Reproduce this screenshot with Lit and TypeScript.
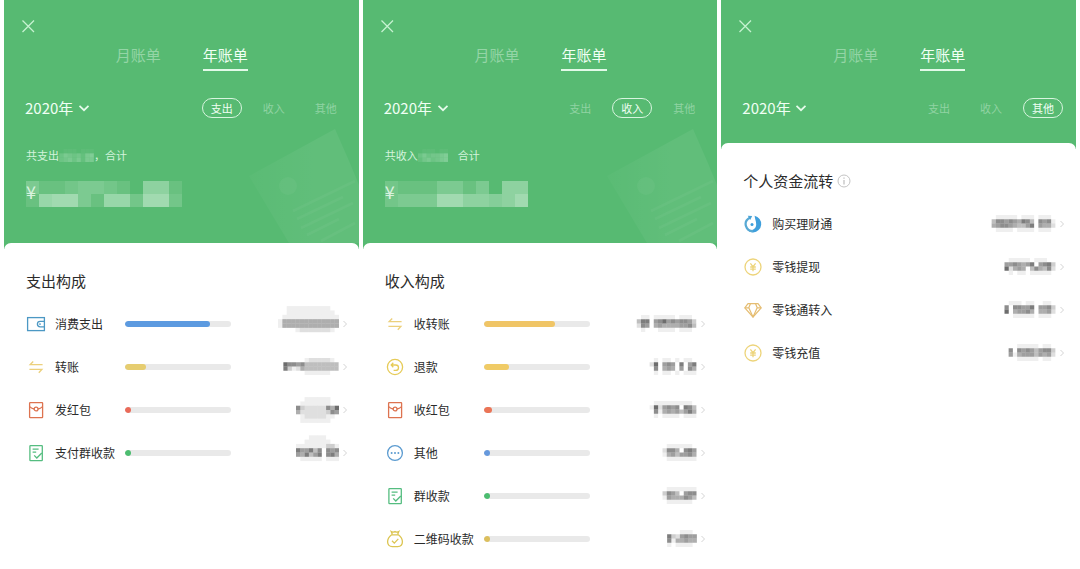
import { LitElement, html, svg, css, nothing } from "lit";
import { customElement, property } from "lit/decorators.js";
import { classMap } from "lit/directives/class-map.js";

type Row = {
  icon: string;
  label: string;
  mask: string[];
  share?: number;
  color?: string;
};

type Panel = {
  id: string;
  active: string;
  title: string;
  info?: boolean;
  summary?: { lead: string; mask: string[]; comma: string; amount: string[] };
  rows: Row[];
};

const FILTERS = ["支出", "收入", "其他"];

const PANELS: Panel[] = [
  {
    id: "out",
    active: "支出",
    title: "支出构成",
    summary: {
      lead: "共支出",
      mask: ["01110111", "35434256", "34535255"],
      comma: "，",
      amount: ["422344320662", "278842773883"],
    },
    rows: [
      { icon: "wallet", label: "消费支出", share: 80, color: "#5c9ae0",
        mask: ["00111111111100", "00111111111110", "01111111111111", "15555555555555", "15555555555555", "00001222222210", "00000000000000", "00000000000000"] },
      { icon: "transfer", label: "转账", share: 20, color: "#e6cd70",
        mask: ["0000012222210", "9776744444444", "8312544444444", "0000011111100"] },
      { icon: "packet", label: "发红包", share: 6, color: "#ea6a58",
        mask: ["0011111100", "0111111100", "7322222759", "5222222376", "0122222110", "0111111100"] },
      { icon: "sheet", label: "支付群收款", share: 6, color: "#4cbd70",
        mask: ["0001111000", "0011111100", "1111111331", "8668470767", "6584680785", "0111110111", "0000000000", "0000000000"] },
    ],
  },
  {
    id: "in",
    active: "收入",
    title: "收入构成",
    summary: {
      lead: "共收入",
      mask: ["0111011", "3534456", "2453456"],
      comma: "",
      amount: ["32224424066", "34448866568"],
    },
    rows: [
      { icon: "transfer", label: "收转账", share: 67, color: "#f0c566",
        mask: ["01101111101110", "48806796767763", "27605655556674", "01000111101110"] },
      { icon: "refund", label: "退款", share: 24, color: "#f0cb66",
        mask: ["01011010110", "29067608068", "07056506075", "01011010111"] },
      { icon: "packet", label: "收红包", share: 8, color: "#eb7456",
        mask: ["01111111110", "19267670874", "07156564685", "01011110111"] },
      { icon: "more", label: "其他", share: 6, color: "#6699dd",
        mask: ["01111110", "27750786", "15646675", "01111111"] },
      { icon: "sheet", label: "群收款", share: 6, color: "#4cbd70",
        mask: ["01111111", "37640677", "16555764", "01111110"] },
      { icon: "bag", label: "二维码收款", share: 6, color: "#dcbf5c",
        mask: ["0001110", "8326766", "7155655", "1011110"] },
    ],
  },
  {
    id: "other",
    active: "其他",
    title: "个人资金流转",
    info: true,
    rows: [
      { icon: "fund", label: "购买理财通",
        mask: ["011111011101110", "477676587407671", "567765446806552", "011110111101110"] },
      { icon: "coin", label: "零钱提现",
        mask: ["011111011100", "667656806783", "925650475472", "010110111110"] },
      { icon: "gem", label: "零钱通转入",
        mask: ["011101100110", "707766806673", "905667505562", "001111101110"] },
      { icon: "coin", label: "零钱充值",
        mask: ["00111110110", "70767646773", "61566646562", "00111110110"] },
    ],
  },
];

const ICONS: Record<string, unknown> = {
  wallet: svg`<g fill="none" stroke="#4c98c4" stroke-width="1.3">
    <rect x="1.6" y="3.6" width="16.8" height="13"/>
    <path d="M18.4 7.3h-4.2a2.8 2.8 0 0 0 0 5.6h4.2"/><path d="M14 9.2v1.8"/></g>`,
  transfer: svg`<g fill="none" stroke="#ecd07c" stroke-width="1.4">
    <path d="M16.6 7.6H4.2l3-3.2"/><path d="M3.4 12.4h12.4l-3 3.4"/></g>`,
  packet: svg`<g fill="none" stroke="#dd7350" stroke-width="1.3">
    <rect x="3.6" y="2.6" width="13" height="15" rx=".6"/>
    <path d="M3.6 6.6c1.6 1.5 3 2.2 4.6 2.4M16.6 6.6c-1.6 1.5-3 2.2-4.6 2.4"/>
    <circle cx="10.1" cy="9" r="1.9"/></g>`,
  sheet: svg`<g fill="none" stroke="#55bd80" stroke-width="1.3">
    <rect x="3.9" y="2.6" width="12.4" height="15" rx=".6"/>
    <path d="M6.6 6.2h6M6.6 9.2h3.6M8.2 12.4l2.6 2.6 5-5"/></g>`,
  refund: svg`<g fill="none" stroke="#e6cb58" stroke-width="1.3">
    <circle cx="10" cy="10" r="7.6"/>
    <path d="M8.3 5.8 6.2 8l2.1 2.2M6.4 8h4.4a2.7 2.7 0 0 1 0 5.4H8.6"/></g>`,
  more: svg`<circle cx="10" cy="10" r="7.4" fill="none" stroke="#5b9bd0" stroke-width="1.3"/>
    <g fill="#5b9bd0"><circle cx="6.6" cy="10" r="1"/><circle cx="10" cy="10" r="1"/><circle cx="13.4" cy="10" r="1"/></g>`,
  bag: svg`<g fill="none" stroke="#dcc552" stroke-width="1.3">
    <path d="M7.4 5.6 6.2 2.6c1.4.8 2.4.8 3.8 0 1.4.8 2.4.8 3.8 0l-1.2 3"/>
    <path d="M6.6 5.8h6.8c2.6 2 4 4.6 4 7 0 3.2-2 4.8-4.6 4.8H7.2c-2.6 0-4.6-1.6-4.6-4.8 0-2.4 1.4-5 4-7z"/>
    <path d="m7 11.8 2.3 2.3 4-4.2"/></g>`,
  fund: svg`<path d="M11.6 1.8a8.4 8.4 0 0 1-1.4 16.6c-2.6 0-4.7-1-6.2-2.6 4.6 1.3 9.2-.8 9.2-5.4 0-3.2-1.4-5.8-1.6-8.6z" fill="#3f9fdc"/>
    <path d="M6.8 3.8C3.4 5.6 2 9 3 12.2c1 3.4 3.8 5 7 5" fill="none" stroke="#58a9d4" stroke-width="2.2"/>
    <path d="m4.8 1.8 4.4.2-2 4z" fill="#4aa3d6"/><circle cx="9" cy="10.6" r="1.5" fill="#3f9fdc"/>`,
  coin: svg`<g fill="none" stroke="#edd47a" stroke-width="1.3">
    <circle cx="10" cy="10" r="8"/><path d="m7.4 6.4 2.6 3.2 2.6-3.2M10 9.6v4.6M7.2 10h5.6M7.2 12.2h5.6"/></g>`,
  gem: svg`<g fill="none" stroke="#e5bd72" stroke-width="1.2" stroke-linejoin="round">
    <path d="M5 3.6h10l3.2 4.2L10 17 1.8 7.8z"/><path d="M1.8 7.8h4l1.6-4M18.2 7.8h-4l-1.6-4M5.8 7.8 10 17l4.2-9.2"/></g>`,
};

@customElement("pixel-mask")
export class PixelMask extends LitElement {
  @property({ attribute: false }) rows: string[] = [];
  @property({ type: Number }) cell = 13;

  static styles = css`
    :host { display: inline-flex; }
    svg { display: block; fill: currentColor; }
  `;

  render() {
    const columns = this.rows[0]?.length ?? 0;
    const c = this.cell;
    const w = columns * c;
    const h = this.rows.length * c;
    return html`<svg aria-hidden="true" width=${Math.round(w / 3)} height=${Math.round(h / 3)} viewBox="0 0 ${w} ${h}">
      ${this.rows.map((line, y) =>
        [...line].map((level, x) =>
          level === "0"
            ? nothing
            : svg`<rect x=${x * c} y=${y * c} width=${c} height=${c} fill-opacity=${Number(level) / 14}/>`
        )
      )}
    </svg>`;
  }
}

@customElement("bill-panel")
export class BillPanel extends LitElement {
  @property({ attribute: false }) panel!: Panel;

  static styles = css`
    :host { display: block; min-width: 0; }
    * { box-sizing: border-box; }
    button, select {
      appearance: none; border: 0; margin: 0; padding: 0; background: none;
      color: inherit; font: inherit; cursor: pointer;
    }
    .header {
      position: relative; overflow: hidden; padding: 16px 13px 31px 14px;
      background: #57ba72; color: #f0fff4;
    }
    .header.tall { padding-bottom: 42px; }
    .close { display: block; width: 20px; height: 20px; }
    .close svg, .icon, .chevron, .info { display: block; }
    .tabs { display: flex; justify-content: center; gap: 42px; padding-top: 10px; }
    .tab {
      padding-bottom: 5px; border-bottom: 2px solid transparent;
      font-size: 15px; line-height: 18px; color: #94d5a6;
    }
    .tab.active { color: #f0fff4; border-color: #e2fae8; }
    .controls { display: flex; align-items: center; justify-content: space-between; margin-top: 27px; padding-left: 7px; }
    .year { display: flex; align-items: center; gap: 4px; font-size: 15px; line-height: 20px; }
    .filters { display: flex; gap: 12px; }
    .filter {
      width: 40px; height: 20px; border: 1px solid transparent; border-radius: 10px;
      font-size: 11px; line-height: 18px; color: #90d3a3;
    }
    .filter.active { color: #f0fff4; border-color: #d8f5df; }
    .summary {
      display: flex; align-items: center; margin: 29px 0 18px; padding-left: 8px;
      font-size: 11px; line-height: 16px; color: #d3f3dc;
    }
    .summary pixel-mask { color: #b9e8c6; }
    .sum { margin-right: 10px; }
    .amount { display: grid; justify-content: start; padding-left: 8px; font-size: 18px; line-height: 20px; color: #d9f3df; }
    .amount > * { grid-area: 1 / 1; }
    .yen { justify-self: start; }
    .watermark { position: absolute; right: 0; bottom: 6px; }
    .sheet {
      position: relative; margin-top: -6px; padding: 27px 11px 8px 22px;
      border-radius: 7px 7px 0 0; background: #fff; color: #2b2b2b;
    }
    .heading { display: flex; align-items: center; gap: 4px; margin-bottom: 10px; }
    h2 { margin: 0; font-size: 15px; line-height: 22px; font-weight: 400; }
    ul { list-style: none; margin: 0; padding: 0; }
    .row {
      display: grid; grid-template-columns: 20px 61px minmax(0, 106px) 1fr 6px;
      align-items: center; height: 43px; column-gap: 9px;
      font-size: 12px; line-height: 18px; color: inherit; text-decoration: none;
    }
    .row.plain { grid-template-columns: 20px 1fr auto 6px; }
    .label { white-space: nowrap; }
    .value { justify-self: end; margin-right: -6px; color: #1c1c1c; }
    .bar { height: 6px; border-radius: 3px; background: #e9e9e9; overflow: hidden; }
    .fill { height: 100%; border-radius: 3px; }
  `;

  private renderRow(row: Row) {
    const plain = row.share === undefined;
    return html`<li>
      <a class=${classMap({ row: true, plain })} href="#${this.panel.id}">
        <svg class="icon" width="20" height="20" viewBox="0 0 20 20" aria-hidden="true">${ICONS[row.icon]}</svg>
        <span class="label">${row.label}</span>
        ${plain
          ? nothing
          : html`<div class="bar"><div class="fill" style="width:${row.share}%;background:${row.color}"></div></div>`}
        <pixel-mask class="value" .rows=${row.mask}></pixel-mask>
        <svg class="chevron" width="6" height="10" viewBox="0 0 6 10" aria-hidden="true">
          <path d="m1.5 2 3 3-3 3" fill="none" stroke="#d4d4d4"/>
        </svg>
      </a>
    </li>`;
  }

  render() {
    const p = this.panel;
    const s = p.summary;
    return html`
      <header class=${classMap({ header: true, tall: !!s })}>
        ${s
          ? html`<svg class="watermark" width="118" height="116" viewBox="0 0 118 116" aria-hidden="true">
              <defs><linearGradient id="fade" x1="0" x2="1"><stop stop-color="#fff" stop-opacity=".02"/><stop offset=".6" stop-color="#fff" stop-opacity=".06"/></linearGradient></defs>
              <path d="M8 49 94 2l14 32 10 24v58H48z" fill="url(#fade)"/>
              <circle cx="47" cy="59" r="9" fill="#fff" fill-opacity=".04"/>
              <g fill="none" stroke="#fff" stroke-opacity=".04" stroke-width="3">
                <path d="m52 84 62-30M56 92l46-22M60 101l52-25M66 108l32-16M80 114l34-18"/>
              </g>
            </svg>`
          : nothing}
        <button class="close" type="button" aria-label="关闭">
          <svg width="20" height="20" viewBox="0 0 20 20"><path d="m4.5 4.5 11.5 11.5M16 4.5 4.5 16" fill="none" stroke="#c6f2d1" stroke-width="1.3"/></svg>
        </button>
        <nav class="tabs">
          <button class="tab" type="button">月账单</button>
          <button class="tab active" type="button">年账单</button>
        </nav>
        <div class="controls">
          <label class="year">
            <select aria-label="年份"><option>2020年</option></select>
            <svg class="chevron" width="12" height="10" viewBox="0 0 12 10" aria-hidden="true"><path d="m1.5 2.8 4.5 4.4 4.5-4.4" fill="none" stroke="#e6fbeb" stroke-width="1.7"/></svg>
          </label>
          <div class="filters">
            ${FILTERS.map(
              (f) => html`<button type="button" class=${classMap({ filter: true, active: f === p.active })}>${f}</button>`
            )}
          </div>
        </div>
        ${s
          ? html`<div class="summary">
                <span>${s.lead}</span>
                <pixel-mask class=${classMap({ sum: !s.comma })} .rows=${s.mask}></pixel-mask>
                <span>${s.comma}合计</span>
              </div>
              <div class="amount">
                <span class="yen">¥</span>
                <pixel-mask .rows=${s.amount} .cell=${39}></pixel-mask>
              </div>`
          : nothing}
      </header>
      <section class="sheet">
        <div class="heading">
          <h2>${p.title}</h2>
          ${p.info
            ? html`<svg class="info" width="14" height="14" viewBox="0 0 14 14" aria-hidden="true">
                <circle cx="7" cy="7" r="6" fill="none" stroke="#c4c4c4"/><path d="M7 3.5v1.2M7 6v4.4" stroke="#bdbdbd" stroke-width="1.2"/>
              </svg>`
            : nothing}
        </div>
        <ul>${p.rows.map((r) => this.renderRow(r))}</ul>
      </section>
    `;
  }
}

@customElement("app-root")
export class AppRoot extends LitElement {
  static styles = css`
    :host {
      display: block; background: #fff;
      font-family: "Noto Sans CJK SC", "Noto Sans", sans-serif;
    }
    .board { display: grid; grid-template-columns: repeat(3, minmax(0, 1fr)); gap: 4px; padding: 0 4px; align-items: start; }
  `;

  render() {
    return html`<main class="board">
      ${PANELS.map((p) => html`<bill-panel .panel=${p}></bill-panel>`)}
    </main>`;
  }
}
